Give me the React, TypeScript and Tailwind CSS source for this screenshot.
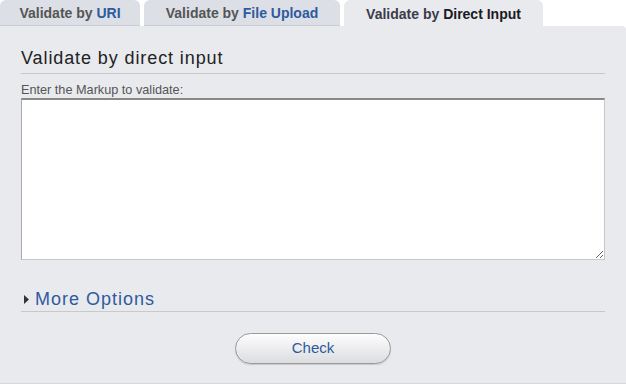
export default function App() {
  return (
    <div className="w-[626px] h-[385px] bg-white font-['Liberation_Sans',Arial,sans-serif]">
      <div className="flex gap-1 h-[26px]">
        <div className="w-[140px] h-[26px] pt-[2px] rounded-t-[6px] bg-[#dcdfe6] border-b border-[#c9ccd4] flex items-center justify-center text-[14px] font-bold text-[#555]">
          Validate by&nbsp;<span className="text-[#2e5a9e]">URI</span>
        </div>
        <div className="w-[196px] h-[26px] pt-[2px] rounded-t-[6px] bg-[#dcdfe6] border-b border-[#c9ccd4] flex items-center justify-center text-[14px] font-bold text-[#555]">
          Validate by&nbsp;<span className="text-[#2e5a9e]">File Upload</span>
        </div>
        <div className="w-[199px] h-[26px] pt-[2px] rounded-t-[6px] bg-[#e9eaee] flex items-center justify-center text-[14px] font-bold text-[#3b3b4a]">
          Validate by&nbsp;<span className="text-[#1a1a22]">Direct Input</span>
        </div>
      </div>
      <div className="h-[358px] bg-[#e9eaee] rounded-tr-[4px] border-b border-[#d6d8de] px-[21px] pt-[22px]">
        <h2 className="text-[18px] leading-[21px] text-[#222] tracking-[0.9px] pb-[4px] border-b border-[#c8c9ce]">
          Validate by direct input
        </h2>
        <label className="block text-[12.7px] leading-[14px] text-[#555] mt-[9px] mb-[1px]">
          Enter the Markup to validate:
        </label>
        <textarea className="block w-[584px] h-[162px] bg-white border border-[#c7c7c7] border-t-[#888] border-l-[#aaa] border-t-2 resize" />
        <div className="mt-[29px] flex items-center pb-[2px] border-b border-[#c8c9ce]">
          <svg width="5" height="9" viewBox="0 0 5 9" className="ml-[3px] mr-[6px]">
            <path d="M0 0 L5 4.5 L0 9 Z" fill="#333" />
          </svg>
          <span className="text-[18px] leading-[20px] text-[#2e5a9e] tracking-[1px]">More Options</span>
        </div>
        <div className="flex justify-center mt-[21px]">
          <button className="w-[156px] h-[31px] rounded-full border border-[#9a9a9a] bg-gradient-to-b from-[#fdfdfd] to-[#dcdde0] shadow-[0_1px_1px_rgba(0,0,0,0.15)] text-[15px] text-[#2e5a9e]">
            Check
          </button>
        </div>
      </div>
    </div>
  );
}
